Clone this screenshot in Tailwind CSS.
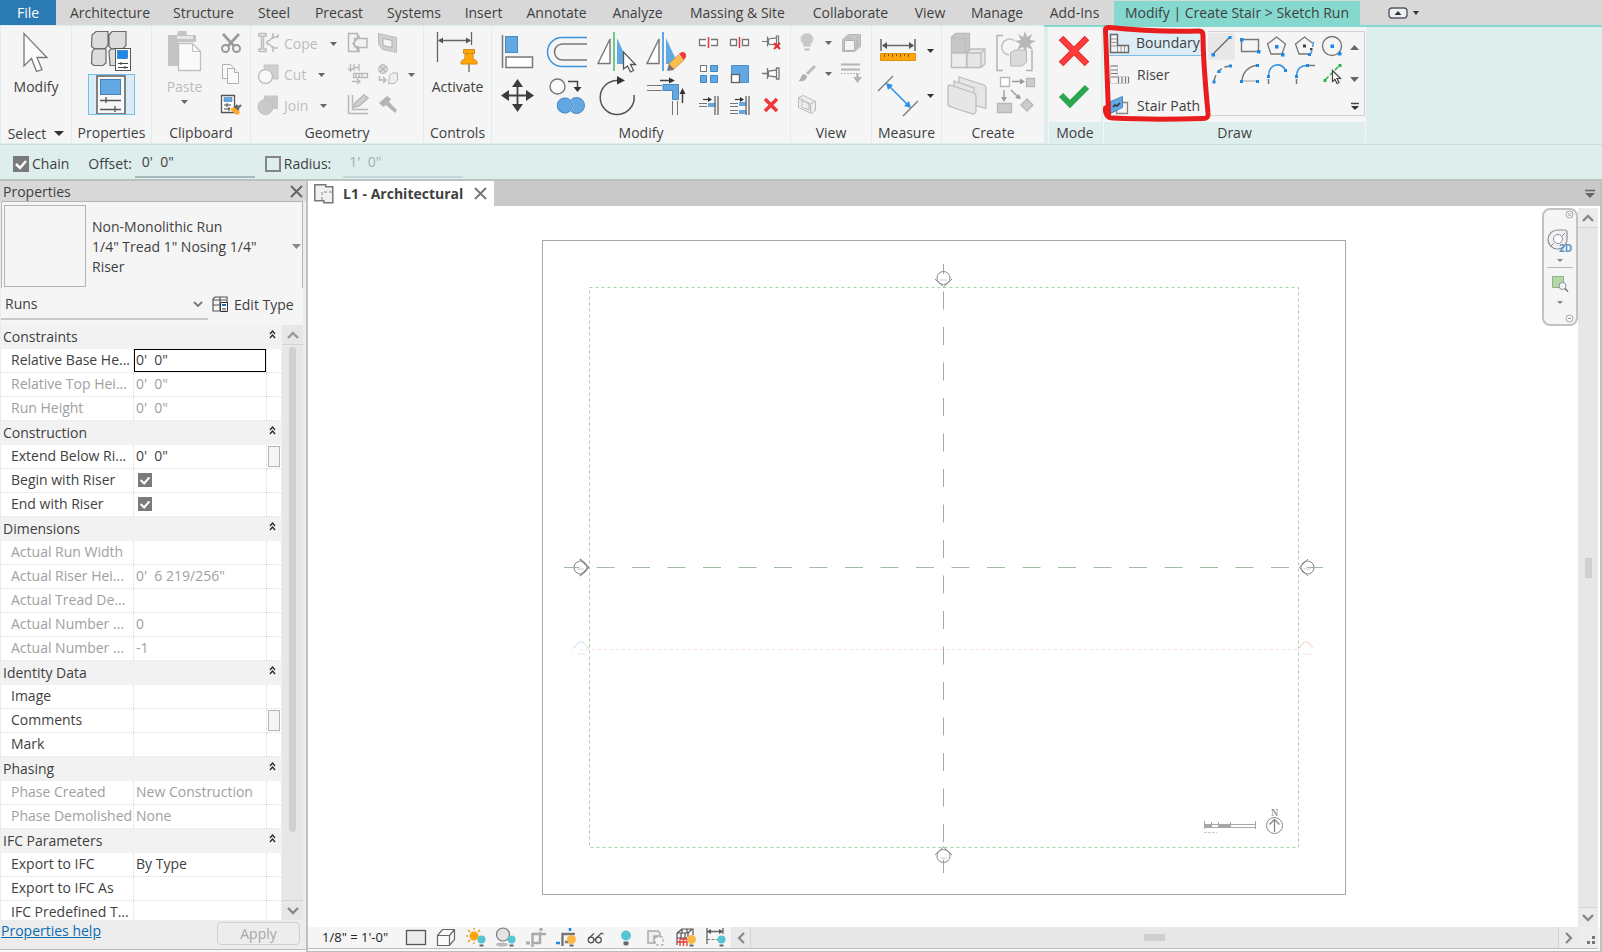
<!DOCTYPE html>
<html lang="en">
<head>
<meta charset="utf-8">
<title>Sketch Run - L1 Architectural</title>
<script src="https://cdn.jsdelivr.net/npm/@tailwindcss/browser@4"></script>
</head>
<body class="flex h-screen flex-col overflow-hidden bg-[#f5f5f5] font-['Open_Sans','Noto_Sans',sans-serif] text-sm text-[#3f3f3f]">

<!-- Ribbon tabs -->
<nav class="flex h-[25px] shrink-0 items-stretch bg-[#d8d8d8] whitespace-nowrap">
  <button class="mr-[2px] w-14 bg-[#2a7ab4] text-white">File</button>
  <button class="w-[104px]">Architecture</button>
  <button class="w-[83px]">Structure</button>
  <button class="w-[58px]">Steel</button>
  <button class="w-[72px]">Precast</button>
  <button class="w-[78px]">Systems</button>
  <button class="w-[61px]">Insert</button>
  <button class="w-[85px]">Annotate</button>
  <button class="w-[77px]">Analyze</button>
  <button class="w-[123px]">Massing &amp; Site</button>
  <button class="w-[103px]">Collaborate</button>
  <button class="w-14">View</button>
  <button class="w-[78px]">Manage</button>
  <button class="w-[77px]">Add-Ins</button>
  <button class="mt-px ml-px w-[246px] bg-[#84d8ce]">Modify | Create Stair &gt; Sketch Run</button>
  <button aria-label="Minimize ribbon" class="ml-7"><svg width="34" height="14" viewBox="0 0 34 14"><rect x="1" y="2" width="18" height="10" rx="3" fill="#eef0f4" stroke="#555b66" stroke-width="1.4"/><path d="M6.500 9h7L10 5zM25 5h6l-3 4z" fill="#333"/></svg></button>
</nav>

<!-- Ribbon -->
<div class="flex h-[120px] shrink-0 border-b border-[#cddada] bg-[#deeeed]">
  <section class="mt-px mb-px ml-px flex w-[70px] flex-col bg-[#f5f5f5]">
    <button class="flex h-24 flex-col items-center"><svg width="70" height="48" viewBox="1 26 70 48"><path d="M24 33.500V66L31.500 58.500 36.500 71.500 42 69.500 37 57.500H47z" fill="#fcfcfc" stroke="#777" stroke-width="1.300"/></svg><span class="mt-[3px]">Modify</span></button>
    <button class="flex h-[22px] items-center justify-center gap-2 pt-[3px]">Select <svg width="10" height="5" viewBox="0 0 10 5"><path d="M0 0h10L5 5z" fill="#333"/></svg></button>
  </section>
  <section class="mt-px mb-px ml-px flex w-[79px] flex-col bg-[#f5f5f5]">
    <div class="flex h-24 flex-col items-center pt-1">
      <button aria-label="Type Properties"><svg width="47" height="44" viewBox="88 30 47 44"><g fill="#dcdcdc" stroke="#6b6b6b" stroke-width="1.200"><path d="M92 35l4-3.500h12v14l-3 3H94l-2.500-2zM109 35l3-3.500h14v14l-3 3h-12l-2-2zM92 52l2-3h12v14l-3 2.500H94l-2.500-2zM109 51l2-2h14v14l-3 2.500h-12z"/></g><rect x="115.500" y="48.500" width="15" height="22" fill="#fff" stroke="#555"/><rect x="117.500" y="50.500" width="10" height="8" fill="#1e88e5" stroke="#1565c0" stroke-width=".6"/><path d="M118 63.500h10M118 67.500h10M121 62v3M125 66v3" stroke="#444"/></svg></button>
      <button aria-label="Properties" class="h-[41px] w-[47px] border border-[#74bfe6] bg-[#d9ebf5]"><svg width="45" height="39" viewBox="89 76 45 39"><rect x="97" y="77" width="28" height="38" fill="#f7f7f7" stroke="#666" stroke-width="1.600"/><rect x="100.500" y="80.500" width="20" height="15" fill="#62a9e4" stroke="#4a7db0"/><path d="M100 101.500h4M108 101.500h13M100 110.500h12M117 110.500h4M103 101.500h5M106 98v6M112 110.500h5M115 107v6" stroke="#555" stroke-width="1.300"/></svg></button>
    </div>
    <h2 class="pt-[2px] text-center leading-5">Properties</h2>
  </section>
  <section class="mt-px mb-px ml-px flex w-[98px] flex-col bg-[#f5f5f5]">
    <div class="flex h-24">
      <button disabled class="flex w-[62px] flex-col items-center pl-[3px] text-[#bdbdbd]"><svg width="59" height="48" viewBox="154 26 59 48"><path d="M167 35h9l1-4h8l1 4h9v7H177v24H167z" fill="#c4c4c4"/><path d="M176 36h16v3h-16z" fill="#e6e6e6"/><path d="M177.500 43.500h14l8 8v19h-22z" fill="#fafafa" stroke="#c0c0c0" stroke-width="1.300"/><path d="M191.500 43.500v8h8" fill="none" stroke="#c0c0c0"/></svg><span class="mt-[3px]">Paste</span><svg class="mt-[3px]" width="7" height="4"><path d="M0 0h7L3.500 4z" fill="#666"/></svg></button>
      <div class="flex flex-col pt-[2px]">
        <button aria-label="Cut"><svg width="34" height="31" viewBox="214 28 34 31"><g fill="none" stroke="#9a9a9a" stroke-width="2"><circle cx="225.500" cy="48.500" r="3.500"/><circle cx="236.500" cy="48.500" r="3.500"/><path d="M223 34l11 12M239 34L228 46" stroke-width="2.600"/></g></svg></button>
        <button aria-label="Copy"><svg width="34" height="31" viewBox="214 59 34 31"><g fill="#fafafa" stroke="#b0b0b0"><path d="M222.500 64.500h8l3 3v11h-11z"/><path d="M227.500 68.500h7l4 4v11h-11z"/><path d="M234.500 68.500v4h4"/></g></svg></button>
        <button aria-label="Match Type"><svg width="34" height="31" viewBox="214 90 34 31"><path d="M221.500 95.500h13v17h-13z" fill="#fff" stroke="#555" stroke-width="1.300"/><path d="M224 97.500h8v4h-8z" fill="#62a9e4" stroke="#4a7db0" stroke-width=".6"/><path d="M224 105h7M224 109h6M227 103v4M229 107v4" stroke="#444"/><path d="M230 109l4-2 6 5-2 3-3-1z" fill="#ffa726"/><path d="M234 106l5 4M237 109l4-4M236 105l3 3" stroke="#666" stroke-width="2"/></svg></button>
      </div>
    </div>
    <h2 class="pt-[2px] text-center leading-5">Clipboard</h2>
  </section>
  <section class="mt-px mb-px ml-px flex w-[172px] flex-col bg-[#f5f5f5]">
    <div class="flex h-24 pt-[2px] text-[#bdbdbd]">
      <div class="flex w-[91px] flex-col">
        <button class="flex h-[31px] items-center"><svg width="33" height="31" viewBox="251 28 33 31"><g fill="none" stroke="#bcbcbc" stroke-width="1.500"><path d="M259 33.500h7M259 51.500h7M259 33v3h2.500v13H259v3M266 33v3h-2.500v13H266v3M278 37h-5l-4 4h-2M278 48h-5l-4-4h-2v-3M278 34v4M273 33v6M273 46v6" /></g></svg>Cope<svg class="ml-3" width="7" height="4"><path d="M0 0h7L3.500 4z" fill="#666"/></svg></button>
        <button class="flex h-[31px] items-center"><svg width="33" height="31" viewBox="251 59 33 31"><path d="M264 65h14v14h-5a8 8 0 0 0-9-11z" fill="#d0d0d0" stroke="#c4c4c4"/><circle cx="265.500" cy="76.500" r="7" fill="#f8f8f8" stroke="#bcbcbc" stroke-width="1.400"/></svg>Cut<svg class="ml-3" width="7" height="4"><path d="M0 0h7L3.500 4z" fill="#666"/></svg></button>
        <button class="flex h-[31px] items-center"><svg width="33" height="31" viewBox="251 90 33 31"><path d="M264 95.500h14V109h-14z" fill="#c8c8c8"/><circle cx="265.500" cy="107" r="7.500" fill="#cacaca" stroke="#c0c0c0"/></svg>Join<svg class="ml-3" width="7" height="4"><path d="M0 0h7L3.500 4z" fill="#666"/></svg></button>
      </div>
      <div class="flex flex-col">
        <button aria-label="Wall Joins"><svg width="31" height="31" viewBox="341 28 31 31"><path d="M347.500 33.500h9v5h-3v8h3v5h-9zM366 38.500v9h-8v4l-6-8 6-7v2z" fill="#f2f2f2" stroke="#b4b4b4" stroke-width="1.400"/></svg></button>
        <button aria-label="Beam Joins"><svg width="31" height="31" viewBox="341 59 31 31"><g fill="none" stroke="#b8b8b8" stroke-width="1.300"><path d="M349.500 64v6M347 68l2.500 3 2.500-3M353 64v7M358 64v7M353 67.500h5M352.500 73.500h14v4h-14v-4M355 73v4M358 73v4M361 73v4M351 81.500h8M356 79l3 2.500-3 2.500"/></g></svg></button>
        <button aria-label="Split Face"><svg width="31" height="31" viewBox="341 90 31 31"><g fill="none" stroke="#b8b8b8" stroke-width="1.500"><path d="M347.500 95v18.500H367M351.500 95v14.500H367"/><path d="M353 107l1-4 9-8 4 3-9 8z" fill="#d0d0d0"/></g></svg></button>
      </div>
      <div class="flex flex-col">
        <button aria-label="Opening"><svg width="31" height="31" viewBox="373 28 31 31"><path d="M378.500 33.500l18 4v15l-14-3-4-5z" fill="#cfcfcf" stroke="#bcbcbc"/><path d="M383 38.500l9 2v7l-9-2z" fill="#f4f4f4" stroke="#b0b0b0"/></svg></button>
        <button aria-label="Paint"><svg width="31" height="31" viewBox="373 59 31 31"><circle cx="383" cy="69" r="4.500" fill="#ddd" stroke="#b8b8b8"/><path d="M380 66l6 6M386 66l-6 6M379.500 76v4h6M383 77l3 3-3 3" fill="none" stroke="#b8b8b8" stroke-width="1.400"/><path d="M389.500 75.500l3-2.500h5v7l-3 3.500h-6z" fill="#eee" stroke="#b8b8b8"/></svg></button>
        <button aria-label="Demolish"><svg width="31" height="31" viewBox="373 90 31 31"><path d="M379 103l8-7 4 3-2 3 8 8-2 3-9-8-3 2z" fill="#b4b4b4"/></svg></button>
      </div>
      <button aria-label="More paint tools" class="h-[93px] w-4 pl-1"><svg width="7" height="4"><path d="M0 0h7L3.500 4z" fill="#666"/></svg></button>
    </div>
    <h2 class="pt-[2px] text-center leading-5">Geometry</h2>
  </section>
  <section class="mt-px mb-px ml-px flex w-[67px] flex-col bg-[#f5f5f5]">
    <button class="flex h-24 flex-col items-center"><svg width="67" height="48" viewBox="424 26 67 48"><path d="M437.500 32v30M471.500 32v13M439 40.500h31" stroke="#666" fill="none" stroke-width="1.300"/><path d="M438 40.500l5-3v6zM471 40.500l-5-3v6z" fill="#555"/><path d="M469 64v8" stroke="#666" stroke-width="1.300"/><path d="M463.500 49.500h11v4h-1.500v5l4 3v2.500h-16v-2.500l4-3v-5h-1.500z" fill="#ffa509" stroke="#d18a12"/><path d="M465 53.500h8" stroke="#d18a12"/></svg><span class="mt-[3px]">Activate</span></button>
    <h2 class="pt-[2px] text-center leading-5">Controls</h2>
  </section>
  <section class="mt-px mb-px ml-px flex w-[298px] flex-col bg-[#f5f5f5]">
    <div class="flex h-24">
      <div class="grid w-[201px] grid-cols-4 content-start pt-1">
        <button aria-label="Align"><svg width="50" height="44" viewBox="492 30 50 44"><path d="M502.500 35v33" stroke="#777" stroke-width="1.500"/><rect x="505.500" y="36.500" width="12" height="16" fill="#62a9e4" stroke="#4a88be"/><rect x="506" y="57" width="26.500" height="10.500" fill="#fff" stroke="#777" stroke-width="1.500"/></svg></button>
        <button aria-label="Offset"><svg width="50" height="44" viewBox="542 30 50 44"><path d="M587 37.500h-25a14.500 14.500 0 0 0 0 29h25" fill="none" stroke="#3a93e0" stroke-width="1.500"/><path d="M587 44h-24.500a8 8 0 0 0 0 16H587" fill="none" stroke="#777" stroke-width="1.500"/></svg></button>
        <button aria-label="Mirror pick axis"><svg width="50" height="44" viewBox="593 30 50 44"><path d="M610 39v24.500h-12z" fill="#fff" stroke="#777" stroke-width="1.400"/><path d="M617 38l12 26h-12z" fill="#62a9e4"/><path d="M614 32v39" stroke="#4cc06c" stroke-width="1.600"/><path d="M623.500 52v17l4-3 3 6 3-1.500-3-6h5z" fill="#fff" stroke="#555" stroke-width="1.300"/></svg></button>
        <button aria-label="Mirror draw axis"><svg width="50" height="44" viewBox="643 30 50 44"><path d="M659 39v24.500h-12z" fill="#fff" stroke="#777" stroke-width="1.400"/><path d="M666 38l12 26h-12z" fill="#62a9e4"/><path d="M663 32v39" stroke="#3a93e0" stroke-width="1.600"/><path d="M667 71l2-8 4 3 1 4z" fill="#777"/><path d="M669 64l9-9 6 5-10 9z" fill="#fbbf4f" stroke="#c9912d" stroke-width=".7"/><path d="M679 54c2-3 8-3 7 3l-2 3z" fill="#f23c3c"/></svg></button>
        <button aria-label="Move"><svg width="50" height="44" viewBox="492 74 50 44"><path d="M517.500 84v23M506 95.500h23" stroke="#444" stroke-width="1.800"/><path d="M517.500 79l5.500 8h-11zM517.500 112l5.500-8h-11zM501 95.500l8-5.500v11zM534 95.500l-8-5.500v11z" fill="#3c3c3c"/></svg></button>
        <button aria-label="Copy"><svg width="50" height="44" viewBox="542 74 50 44"><circle cx="557.500" cy="86.500" r="7.500" fill="#fafafa" stroke="#777" stroke-width="1.400"/><path d="M568 81.500h9.500V89" fill="none" stroke="#444" stroke-width="1.500"/><path d="M573.500 87h8l-4 5z" fill="#333"/><circle cx="576.500" cy="105.500" r="8" fill="#62a9e4" stroke="#4a88be"/><circle cx="564.500" cy="105.500" r="8.300" fill="#62a9e4" stroke="#f5f5f5"/><circle cx="565" cy="105.500" r="7.500" fill="#62a9e4" stroke="#4a88be"/></svg></button>
        <button aria-label="Rotate"><svg width="50" height="44" viewBox="593 74 50 44"><path d="M618 80.500a17 17 0 1 0 16 14.500" fill="none" stroke="#555" stroke-width="1.500"/><path d="M617 76l8 4.500-8 4z" fill="#333"/></svg></button>
        <button aria-label="Trim"><svg width="50" height="44" viewBox="643 74 50 44"><path d="M660 80.500h10M682.500 103V92" stroke="#444" stroke-width="1.500"/><path d="M669 77.500l6 3-6 3zM682.500 88l-3 6h6z" fill="#333"/><path d="M663 84.500h15.500v15h-6v-9H663z" fill="#62a9e4" stroke="#4a88be"/><path d="M647 85.500h15M647 90.500h15M672.500 101v14M677.500 101v14" stroke="#777"/></svg></button>
      </div>
      <div class="grid w-[93px] grid-cols-3 content-start pt-[2px]">
        <button aria-label="Split element"><svg width="31" height="31" viewBox="693 28 31 31"><path d="M706 39.500h-6.500v6h6.500M711 39.500h6.500v6H711" fill="#fff" stroke="#777" stroke-width="1.300"/><path d="M708.500 37v11" stroke="#e23b3b" stroke-width="1.500"/></svg></button>
        <button aria-label="Split with gap"><svg width="31" height="31" viewBox="724 28 31 31"><path d="M730.500 39.500h6v6h-6zM742.500 39.500h6v6h-6z" fill="#fff" stroke="#777" stroke-width="1.300"/><path d="M739.500 37v11" stroke="#e23b3b" stroke-width="1.500"/></svg></button>
        <button aria-label="Unpin"><svg width="31" height="31" viewBox="755 28 31 31"><path d="M762 41.500h5M767.500 36.500v10M768.500 39v5l8 1v-7zM776.500 36v11h2V36z" fill="#fff" stroke="#777" stroke-width="1.200"/><path d="M774 43l6 6M780 43l-6 6" stroke="#ee2c2c" stroke-width="2"/></svg></button>
        <button aria-label="Array"><svg width="31" height="31" viewBox="693 59 31 31"><rect x="700.500" y="65.500" width="6" height="6" fill="#fff" stroke="#777"/><path d="M710.500 65.500h7v6h-7zM700.500 75.500h6v7h-6zM710.500 75.500h7v7h-7z" fill="#62a9e4" stroke="#3f86c4"/></svg></button>
        <button aria-label="Scale"><svg width="31" height="31" viewBox="724 59 31 31"><path d="M731.500 65.500h17v17h-17z" fill="#62a9e4" stroke="#4a90cc"/><rect x="731.500" y="74.500" width="8" height="8" fill="#fff" stroke="#666" stroke-width="1.400"/></svg></button>
        <button aria-label="Pin"><svg width="31" height="31" viewBox="755 59 31 31"><path d="M762 73.500h5.500M767.500 68v11M768.500 71v5l8 1v-7zM776.500 68v11h2.500V68z" fill="#fff" stroke="#777" stroke-width="1.300"/></svg></button>
        <button aria-label="Extend single"><svg width="31" height="31" viewBox="693 90 31 31"><path d="M703 99.500h6" stroke="#333" stroke-width="1.200"/><path d="M708 97l4 2.500-4 2.500z" fill="#333"/><path d="M699 103.500h8M699 106.500h8" stroke="#777"/><path d="M708 103h8v4h-8z" fill="#62a9e4"/><path d="M715 96v19M718 96v19" stroke="#777" stroke-width="1.500"/></svg></button>
        <button aria-label="Extend multiple"><svg width="31" height="31" viewBox="724 90 31 31"><path d="M735 99.500h6" stroke="#333" stroke-width="1.200"/><path d="M740 97l4 2.500-4 2.500z" fill="#333"/><path d="M730 103.500h8M730 106.500h8M730 110.500h8M730 113.500h8" stroke="#777"/><path d="M739 102h8v4h-8zM739 110h8v4h-8z" fill="#62a9e4"/><path d="M746 96v19M749 96v19" stroke="#777" stroke-width="1.500"/></svg></button>
        <button aria-label="Delete"><svg width="31" height="31" viewBox="755 90 31 31"><path d="M765 99l12 12M777 99l-12 12" stroke="#f23535" stroke-width="3.400"/></svg></button>
      </div>
    </div>
    <h2 class="pt-[2px] text-center leading-5">Modify</h2>
  </section>
  <section class="mt-px mb-px ml-px flex w-20 flex-col bg-[#f5f5f5]">
    <div class="grid h-24 grid-cols-[32px_12px_36px] content-start pt-[2px]">
      <button aria-label="Hide in view"><svg width="32" height="31" viewBox="792 28 32 31"><path d="M804.500 46.500l-.5-3c-4-4-2-10 4-10s8 6 4 10l-.5 3z" fill="#c8c8c8" stroke="#d8d8d8"/><path d="M805.500 48.500h5v2h-5z" fill="#bbb"/></svg></button>
      <button aria-label="Hide options"><svg width="12" height="31"><path d="M2 13h7L5.500 17z" fill="#666"/></svg></button>
      <button aria-label="Selection box"><svg width="36" height="31" viewBox="836 28 36 31"><path d="M843.500 39.500l6-5h12v12l-6 5h-12z" fill="#c4c4c4" stroke="#b8b8b8"/><path d="M845.500 40.500h10v10h-10zM848 38h9l2-1.500M858 40v8" fill="#f4f4f4" stroke="#b0b0b0"/></svg></button>
      <button aria-label="Override graphics"><svg width="32" height="31" viewBox="792 59 32 31"><path d="M799 81c3 0 2-6 6-7l3 2c0 4-4 6-9 5z" fill="#b0b0b0"/><path d="M808 74l8-8" stroke="#bcbcbc" stroke-width="3"/></svg></button>
      <button aria-label="Override options"><svg width="12" height="31"><path d="M2 13h7L5.500 17z" fill="#666"/></svg></button>
      <button aria-label="Linework"><svg width="36" height="31" viewBox="836 59 36 31"><path d="M842 64.500h19M842 69.500h19" stroke="#b4b4b4" stroke-width="2"/><path d="M842 73.500h19" stroke="#b4b4b4" stroke-dasharray="2 1"/><path d="M858.500 74v5" stroke="#aaa" stroke-width="2"/><path d="M854 77h9l-4.500 6z" fill="#b4b4b4"/></svg></button>
      <button aria-label="Displace elements"><svg width="32" height="31" viewBox="792 90 32 31"><path d="M799.500 97.500l5-2 12 6v9l-4 3-13-6zM799.500 98l12 6v9M811.500 104l5-3M803 100v7l7 3v-6z" fill="#ececec" stroke="#bcbcbc"/></svg></button>
    </div>
    <h2 class="pt-[2px] text-center leading-5">View</h2>
  </section>
  <section class="mt-px mb-px ml-px flex w-[69px] flex-col bg-[#f5f5f5]">
    <div class="grid h-24 grid-cols-[48px_21px] content-start pt-1">
      <button aria-label="Aligned dimension"><svg width="48" height="44" viewBox="872 30 48 44"><path d="M881 39v12M915 39v12M883 45.500h30" stroke="#666" stroke-width="1.500"/><path d="M882 45.500l5-3.500v7zM914 45.500l-5-3.500v7z" fill="#555"/><path d="M880.500 53.500h35v7h-35z" fill="#ffa409" stroke="#dd9312"/><path d="M884.500 54v3M888.500 54v2M892.500 54v3M896.500 54v2M900.500 54v3M904.500 54v2M908.500 54v3" stroke="#7a5513"/></svg></button>
      <button aria-label="Dimension options"><svg width="21" height="44"><path d="M7 19h7L10.500 23z" fill="#333"/></svg></button>
      <button aria-label="Measure between"><svg width="48" height="44" viewBox="872 74 48 44"><path d="M878 91l15-15M903 116l15-15" stroke="#777" stroke-width="1.300"/><path d="M889 86l19 19" stroke="#2c8fe4" stroke-width="1.600"/><path d="M886 83l7 2-5 5zM911 108l-7-2 5-5z" fill="#2c8fe4"/></svg></button>
      <button aria-label="Measure options"><svg width="21" height="44"><path d="M7 20h7L10.500 24z" fill="#333"/></svg></button>
    </div>
    <h2 class="pt-[2px] text-center leading-5">Measure</h2>
  </section>
  <section class="mt-px mb-px ml-px flex w-[102px] flex-col bg-[#f5f5f5]">
    <div class="grid h-24 grid-cols-[50px_52px] content-start pt-1">
      <button aria-label="Create assembly"><svg width="50" height="44" viewBox="942 30 50 44"><g stroke="#bdbdbd" stroke-width="1.300"><path d="M951.500 37l4-3.500h14v16l-4 3.500h-14z" fill="#c8c8c8"/><path d="M951.500 53h15v14.500h-15z" fill="#ececec"/><path d="M967 53l4-4h14v15l-4 3.500h-14z" fill="#e6e6e6"/><path d="M967 53h14v14M981 53l4-4M951.500 38h14v15" fill="none"/></g></svg></button>
      <button aria-label="Create parts"><svg width="52" height="44" viewBox="992 30 52 44"><path d="M1003 35.500h-6v35h6M1026 70.500h6V50" fill="none" stroke="#b0b0b0" stroke-width="1.400"/><path d="M1009 55a8 8 0 1 1 6-14" fill="none" stroke="#c4c4c4" stroke-width="1.500"/><path d="M1025 31l2 6 5-3-2 6 6 1-6 3 3 6-6-3-2 5-2-5-6 3 3-6-5-3 6-1-3-6 5 3z" fill="#b8b8b8"/><path d="M1010.500 53l4-3h12v12l-4 4h-12z" fill="#dadada" stroke="#b8b8b8"/></svg></button>
      <button aria-label="Create group"><svg width="50" height="44" viewBox="942 74 50 44"><g fill="#e6e6e6" stroke="#bcbcbc" stroke-width="1.300"><path d="M959 77l25 8q2 1 2 3v19q0 2-2 1l-23-7q-2-1-2-3z"/><path d="M954 81l20 7v20l-20-6z"/><path d="M950 85l24 8q2 1 2 3v16q-1 2-3 2l-22-7q-3-1-3-3V87q0-2 2-2z"/></g></svg></button>
      <button aria-label="Create similar"><svg width="52" height="44" viewBox="992 74 52 44"><g stroke="#b8b8b8" stroke-width="1.300" fill="#ccc"><path d="M1000.500 77.500h9v9h-9z" fill="#fff"/><path d="M1026.500 78.500h8v8h-8zM997.500 103.500h14v9h-14zM1027 99l6 6-6 6-6-6z"/><path d="M1012 81.500h9M1004 90v8M1011 90l7 7" stroke="#999"/></g><path d="M1020 78.500l5 3-5 3zM1001 97h6l-3 5zM1021 99l-6-1 4-4z" fill="#999"/></svg></button>
    </div>
    <h2 class="pt-[2px] text-center leading-5">Create</h2>
  </section>

  <!-- Contextual panels -->
  <div class="flex flex-1 border-t-2 border-[#84d8ce] pb-px pl-1">
    <section class="flex w-[53px] flex-col bg-[#f5f5f5]">
      <div class="flex h-[95px] flex-col items-center pt-[3px]">
        <button aria-label="Cancel edit mode"><svg width="53" height="44" viewBox="1048 30 53 44"><path d="M1061 38l26 26M1087 38l-26 26" stroke="#e12929" stroke-width="6.400"/><path d="M1061.500 38.500l25 25M1086.500 38.500l-25 25" stroke="#ff3b3b" stroke-width="4.600"/></svg></button>
        <button aria-label="Finish edit mode"><svg width="53" height="44" viewBox="1048 74 53 44"><path d="M1061 95l9 9 17-17" fill="none" stroke="#2aa64e" stroke-width="6"/></svg></button>
      </div>
      <h2 class="ml-px flex-1 bg-[#deeeed] pt-px text-center leading-5">Mode</h2>
    </section>
    <section class="relative ml-0.5 flex w-[263px] flex-col border-r border-l border-[#f5f5f5] bg-[#f5f5f5]">
      <div class="flex h-[95px]">
        <div class="flex w-[104px] flex-col gap-[6px] pt-1 pr-[6px] pl-[5px]">
          <button class="flex h-[25px] items-center gap-[6px] border-b border-[#7dbfe8] bg-[#dcedf6]"><svg width="21" height="21" viewBox="0 0 21 21"><path d="M1.500 1.500h7v11h11v7h-18z" fill="#f2f2f2" stroke="#666" stroke-width="1.400"/><path d="M2 6h6M2 9.500h6M2 13h6M8.500 13v6M12 13v6M15.500 13v6" stroke="#999"/></svg>Boundary</button>
          <button class="flex h-[25px] items-center gap-[7px]"><svg width="21" height="21" viewBox="0 0 21 21"><path d="M1.500 1.500h7v11h11v7h-18z" fill="none" stroke="#ccc"/><path d="M2 2h6.500M2 6h6.500M2 9.500h6.500M2 13h6.500M9.500 13v6M13 13v6M16.500 13v6M19.500 13v6" stroke="#777" stroke-width="1.200"/></svg>Riser</button>
          <button class="flex h-[25px] items-center gap-[7px] whitespace-nowrap"><svg width="21" height="21" viewBox="0 0 21 21"><path d="M7.500 7.500h11v11h-11z" fill="#f5f5f5" stroke="#888" stroke-width="1.300"/><path d="M1.500 6.500l12-5v11l-12 6z" fill="#62a9e4" stroke="#4a88be"/><path d="M4 12l2-2 2 1 3-3" stroke="#333" fill="none" stroke-width="1.500"/></svg>Stair Path</button>
        </div>
        <div class="mt-1 flex h-[85px] flex-1 border border-l-0 border-[#d2d2d2]">
          <div class="grid flex-1 grid-cols-5 content-start justify-items-center pt-px">
            <button aria-label="Line" class="bg-[#e8e8e8]"><svg width="27" height="27" viewBox="1205 33 27 27"><path d="M1211 53l15-15" stroke="#666" stroke-width="1.300"/><path d="M1208.500 53h3.500v3.500h-3.500zM1225.500 36h3v3h-3z" fill="#1e88e5"/></svg></button>
            <button aria-label="Rectangle"><svg width="27" height="27" viewBox="1232 33 27 27"><path d="M1237.500 39.500h17v12h-17z" fill="none" stroke="#777" stroke-width="1.400"/><path d="M1236 38h3.500v3.500h-3.500zM1253 50h3.500v3.500h-3.500z" fill="#1e88e5"/></svg></button>
            <button aria-label="Inscribed polygon"><svg width="27" height="27" viewBox="1259 33 27 27"><path d="M1272.500 37l9 7-3.500 10h-11l-3.500-10z" fill="none" stroke="#777" stroke-width="1.300"/><path d="M1271 45h3.500v3.500h-3.500zM1277 53h3.500v3.500h-3.500z" fill="#1e88e5"/></svg></button>
            <button aria-label="Circumscribed polygon"><svg width="27" height="27" viewBox="1286 33 27 27"><path d="M1307.500 43l-8-6-9 7 3.500 10h9" fill="none" stroke="#777" stroke-width="1.300"/><path d="M1298 44.500h3v3h-3z" fill="#444"/><path d="M1305 48h2.500v2.500h-2.500z" fill="#444"/><path d="M1308.500 42l-1 5M1307 51l-2 4" stroke="#1e88e5" stroke-width="1.200"/><path d="M1303 53h3v3h-3z" fill="#1e88e5"/></svg></button>
            <button aria-label="Circle"><svg width="27" height="27" viewBox="1313 33 27 27"><circle cx="1326" cy="46" r="9.500" fill="none" stroke="#777" stroke-width="1.400"/><path d="M1324.500 44.500h3.500v3.500h-3.500zM1332 52h3.500v3.500h-3.500z" fill="#1e88e5"/></svg></button>
            <button aria-label="Start-end-radius arc"><svg width="27" height="27" viewBox="1205 60 27 27"><path d="M1211 81q3-14 16-15" fill="none" stroke="#777" stroke-width="1.500" stroke-dasharray="6 3"/><path d="M1209.500 80.500h3v3h-3zM1214.500 70h3v3h-3zM1226 64.500h3v3h-3z" fill="#1e88e5"/></svg></button>
            <button aria-label="Center-ends arc"><svg width="27" height="27" viewBox="1232 60 27 27"><path d="M1238 80q2-13 16-15" fill="none" stroke="#777" stroke-width="1.400"/><path d="M1239 81h14" stroke="#bbb" stroke-width="1.400"/><path d="M1236 80h3v3h-3zM1252 64h3v3h-3zM1252 80h3v3h-3z" fill="#1e88e5"/></svg></button>
            <button aria-label="Tangent end arc"><svg width="27" height="27" viewBox="1259 60 27 27"><path d="M1264.500 77c0-14 12-15 17-7" fill="none" stroke="#3a93e0" stroke-width="1.500"/><path d="M1264.500 79v5" stroke="#777" stroke-width="1.500"/><path d="M1263 75h3v3h-3zM1280 69h3v3h-3z" fill="#1e88e5"/></svg></button>
            <button aria-label="Fillet arc"><svg width="27" height="27" viewBox="1286 60 27 27"><path d="M1291.500 77c0-8 4-11.500 11-11.500" fill="none" stroke="#3a93e0" stroke-width="1.500"/><path d="M1291.500 79v5M1304 65.500h6" stroke="#777" stroke-width="1.500"/><path d="M1290 75h3v3h-3zM1301 64h3v3h-3z" fill="#1e88e5"/></svg></button>
            <button aria-label="Pick lines"><svg width="27" height="27" viewBox="1313 60 27 27"><path d="M1319 80l15-15" stroke="#35b755" stroke-width="1.500" stroke-dasharray="5 2"/><path d="M1317.500 79h3v3h-3zM1332.500 64h3v3h-3z" fill="#2fb052"/><path d="M1326.500 70.500v11l2.500-2 2 4 2-1-2-4h3.500z" fill="#fff" stroke="#444" stroke-width="1.200"/></svg></button>
          </div>
          <button aria-label="Scroll draw tools" class="w-[18px]"><svg width="18" height="83" viewBox="1340 32 18 83"><path d="M1344 50h9l-4.500-5zM1344 77h9l-4.500 5z" fill="#666"/><path d="M1345 103.500h8" stroke="#444" stroke-width="1.400"/><path d="M1345 106h8l-4 4z" fill="#333"/></svg></button>
        </div>
      </div>
      <h2 class="flex-1 bg-[#deeeed] pt-px text-center leading-5">Draw</h2>
      <!-- Freehand markup around the sketch tools -->
      <svg class="pointer-events-none absolute -top-1 -left-1 z-10" width="112" height="102" viewBox="1099 23 112 102"><path d="M1104.500 30Q1104 27.500 1108 27.500Q1150 32 1198 31Q1202 31 1202 35Q1202 60 1207 113Q1208 118.500 1202 118.500Q1150 120 1112 118Q1104 118 1104.500 108Q1108 116 1107.500 114Q1106 70 1104.500 30z" fill="none" stroke="#e81e1e" stroke-width="5" stroke-linejoin="round"/></svg>
    </section>
  </div>
</div>

<!-- Options bar -->
<div class="flex h-9 shrink-0 items-center border-b-2 border-[#bdc1c0] bg-[#deeeed] pt-[3px] pl-[13px]">
  <input id="chain" type="checkbox" checked class="size-4 appearance-none bg-[#7a7a7a] bg-[url('data:image/svg+xml,%3Csvg%20xmlns=%22http://www.w3.org/2000/svg%22%20viewBox=%220%200%2016%2016%22%3E%3Cpath%20d=%22M3%208l4%204%206-7%22%20fill=%22none%22%20stroke=%22white%22%20stroke-width=%222.500%22/%3E%3C/svg%3E')]">
  <label for="chain" class="ml-[3px]">Chain</label>
  <label for="offset" class="ml-[19px]">Offset:</label>
  <input id="offset" type="text" value="0'  0&quot;" class="ml-[3px] h-[29px] w-[120px] border-b-2 border-[#a9bcbb] px-[7px] pb-[2px]">
  <input id="radius-on" type="checkbox" class="ml-[10px] size-4 appearance-none border-2 border-[#858585]">
  <label for="radius-on" class="ml-[3px]">Radius:</label>
  <input type="text" aria-label="Radius value" value="1'  0&quot;" disabled class="ml-3 h-[29px] w-[120px] border-b-2 border-[#c5d8d7] px-[6px] pb-[2px] text-[#a3aead]">
</div>

<!-- Workspace -->
<main class="flex min-h-0 flex-1 border-r-2 border-[#bdc1c0]">
  <aside class="flex w-[308px] shrink-0 flex-col border-r-2 border-[#bdc1c0] bg-[#ededed]">
    <header class="flex h-5 shrink-0 items-center justify-between bg-[#d8d8d8] pr-[3px] pl-[3px]"><h1 class="pt-px">Properties</h1><button aria-label="Close properties"><svg width="13" height="13" viewBox="0 0 13 13"><path d="M1 1l11 11M12 1L1 12" stroke="#666" stroke-width="2"/></svg></button></header>
    <button class="mr-[3px] ml-px flex h-[87px] shrink-0 items-center border-x border-t border-[#b5b5b5] bg-[#f5f5f5] pt-[2px] pl-[2px] text-left leading-5">
      <span class="h-[82px] w-[82px] border border-[#b5b5b5]"></span>
      <span class="ml-[6px] flex-1 pt-[2px]">Non-Monolithic Run<br>1/4" Tread 1" Nosing 1/4"<br>Riser</span>
      <svg class="mr-px" width="9" height="5"><path d="M0 0h9L4.500 5z" fill="#888"/></svg>
    </button>
    <div class="mr-[3px] ml-px flex h-[37px] shrink-0 bg-[#f5f5f5]">
      <div class="flex h-8 w-[207px] items-center border-b-2 border-[#c8c8c8] pt-[2px] pr-[5px]">
        <select aria-label="Element filter" class="flex-1 appearance-none pl-1"><option>Runs</option></select>
        <svg width="10" height="7" viewBox="0 0 10 7"><path d="M1 1l4 4 4-4" fill="none" stroke="#777" stroke-width="1.800"/></svg>
      </div>
      <button class="ml-1 flex h-8 items-center gap-[5px] pt-px"><svg width="17" height="17" viewBox="0 0 17 17"><path d="M1 3l2-2h12v6M1 3v12h7M1 9h7M8 1v14M1 4h13M8 7h7" fill="none" stroke="#555" stroke-width="1.200"/><path d="M8.500 6.500h7v9h-7z" fill="#fff" stroke="#333"/><path d="M10 8h4v2h-4z" fill="#1e66c0"/><path d="M10 12.500h4M10 14h4" stroke="#555" stroke-width=".8"/></svg>Edit Type</button>
    </div>
    <div class="mr-[3px] ml-px flex min-h-0 flex-1">
      <div class="min-w-0 flex-1 overflow-hidden bg-white">
      <table class="w-full table-fixed border-separate border-spacing-0 text-left whitespace-nowrap [&_td]:h-6 [&_td]:border-r [&_td]:border-b [&_td]:border-dotted [&_td]:border-[#dcdcdc] [&_td]:pb-[2px] [&_td]:leading-5 [&_th]:h-6 [&_th]:bg-[#f2f2f2] [&_th]:p-0 [&_th]:pl-0.5 [&_th]:font-normal [&_td:first-child]:pl-[10px] [&_td:nth-child(2)]:pl-[2px] [&_svg]:mr-[6px] [&_svg]:mb-[6px] [&_tr[data-off]]:text-[#a0a0a0]">
        <colgroup><col class="w-[133px]"><col><col class="w-[15px]"></colgroup>
        <tr><th colspan="3"><button class="flex w-full items-center justify-between">Constraints<svg width="7" height="9"><path d="M1 4l2.500-3L6 4M1 8l2.500-3L6 8" fill="none" stroke="#222" stroke-width="1.200"/></svg></button></th></tr>
        <tr><td><label for="base">Relative Base He...</label></td><td class="pb-0! pl-0!"><input id="base" value="0'  0&quot;" class="block h-[23px] w-full border border-black pb-[2px] pl-px"></td><td></td></tr>
        <tr data-off><td>Relative Top Hei...</td><td class="whitespace-pre">0'  0"</td><td></td></tr>
        <tr data-off><td>Run Height</td><td class="whitespace-pre">0'  0"</td><td></td></tr>
        <tr><th colspan="3"><button class="flex w-full items-center justify-between">Construction<svg width="7" height="9"><path d="M1 4l2.500-3L6 4M1 8l2.500-3L6 8" fill="none" stroke="#222" stroke-width="1.200"/></svg></button></th></tr>
        <tr><td><label for="ext">Extend Below Ri...</label></td><td><input id="ext" value="0'  0&quot;" class="block h-5 w-full"></td><td class="pb-0!"><button aria-label="Associate parameter" class="ml-px block h-[21px] w-3 border border-[#b5b5b5] bg-[#f5f5f5]"></button></td></tr>
        <tr><td><label for="beg">Begin with Riser</label></td><td><input id="beg" type="checkbox" checked class="ml-0.5 block size-[14px] appearance-none bg-[#7a7a7a] bg-[url('data:image/svg+xml,%3Csvg%20xmlns=%22http://www.w3.org/2000/svg%22%20viewBox=%220%200%2016%2016%22%3E%3Cpath%20d=%22M3%208l4%204%206-7%22%20fill=%22none%22%20stroke=%22white%22%20stroke-width=%222.500%22/%3E%3C/svg%3E')]"></td><td></td></tr>
        <tr><td><label for="end">End with Riser</label></td><td><input id="end" type="checkbox" checked class="ml-0.5 block size-[14px] appearance-none bg-[#7a7a7a] bg-[url('data:image/svg+xml,%3Csvg%20xmlns=%22http://www.w3.org/2000/svg%22%20viewBox=%220%200%2016%2016%22%3E%3Cpath%20d=%22M3%208l4%204%206-7%22%20fill=%22none%22%20stroke=%22white%22%20stroke-width=%222.500%22/%3E%3C/svg%3E')]"></td><td></td></tr>
        <tr><th colspan="3"><button class="flex w-full items-center justify-between">Dimensions<svg width="7" height="9"><path d="M1 4l2.500-3L6 4M1 8l2.500-3L6 8" fill="none" stroke="#222" stroke-width="1.200"/></svg></button></th></tr>
        <tr data-off><td>Actual Run Width</td><td></td><td></td></tr>
        <tr data-off><td>Actual Riser Hei...</td><td class="whitespace-pre">0'  6 219/256"</td><td></td></tr>
        <tr data-off><td>Actual Tread De...</td><td></td><td></td></tr>
        <tr data-off><td>Actual Number ...</td><td>0</td><td></td></tr>
        <tr data-off><td>Actual Number ...</td><td>-1</td><td></td></tr>
        <tr><th colspan="3"><button class="flex w-full items-center justify-between">Identity Data<svg width="7" height="9"><path d="M1 4l2.500-3L6 4M1 8l2.500-3L6 8" fill="none" stroke="#222" stroke-width="1.200"/></svg></button></th></tr>
        <tr><td><label for="img">Image</label></td><td><input id="img" class="block h-5 w-full"></td><td></td></tr>
        <tr><td><label for="com">Comments</label></td><td><input id="com" class="block h-5 w-full"></td><td class="pb-0!"><button aria-label="Associate parameter" class="ml-px block h-[21px] w-3 border border-[#b5b5b5] bg-[#f5f5f5]"></button></td></tr>
        <tr><td><label for="mark">Mark</label></td><td><input id="mark" class="block h-5 w-full"></td><td></td></tr>
        <tr><th colspan="3"><button class="flex w-full items-center justify-between">Phasing<svg width="7" height="9"><path d="M1 4l2.500-3L6 4M1 8l2.500-3L6 8" fill="none" stroke="#222" stroke-width="1.200"/></svg></button></th></tr>
        <tr data-off><td>Phase Created</td><td>New Construction</td><td></td></tr>
        <tr data-off><td>Phase Demolished</td><td>None</td><td></td></tr>
        <tr><th colspan="3"><button class="flex w-full items-center justify-between">IFC Parameters<svg width="7" height="9"><path d="M1 4l2.500-3L6 4M1 8l2.500-3L6 8" fill="none" stroke="#222" stroke-width="1.200"/></svg></button></th></tr>
        <tr><td><label for="ifc">Export to IFC</label></td><td><input id="ifc" value="By Type" class="block h-5 w-full"></td><td></td></tr>
        <tr><td><label for="ifcas">Export to IFC As</label></td><td><input id="ifcas" class="block h-5 w-full"></td><td></td></tr>
        <tr><td><label for="ifcp">IFC Predefined T...</label></td><td><input id="ifcp" class="block h-5 w-full"></td><td></td></tr>
      </table>
      </div>
      <div class="flex w-[21px] shrink-0 flex-col items-center bg-[#e7e7e7]">
        <button aria-label="Scroll up" class="flex h-5 w-full items-center justify-center border-b border-[#d4d4d4]"><svg width="12" height="8"><path d="M1 7l5-5 5 5" fill="none" stroke="#999" stroke-width="2.400"/></svg></button>
        <div class="mt-[2px] h-[485px] w-[7px] rounded-full bg-[#d0d0d0]"></div>
        <button aria-label="Scroll down" class="mt-auto flex h-5 w-full items-center justify-center border-t border-[#d4d4d4]"><svg width="12" height="8"><path d="M1 1l5 5 5-5" fill="none" stroke="#888" stroke-width="2.400"/></svg></button>
      </div>
    </div>
    <footer class="flex h-[30px] shrink-0 items-start justify-between border-b border-[#bdbdbd] pr-[6px] pl-px"><a href="#help" class="mt-px text-[#0b6cb0] underline">Properties help</a><button disabled class="mt-[2px] h-[23px] w-[83px] rounded border border-[#d0d0d0] pt-px text-[#a8a8a8]">Apply</button></footer>
    <div class="h-[2px] shrink-0 bg-[#f8f8f8]"></div>
  </aside>

  <div class="flex min-w-0 flex-1 flex-col bg-[#f5f5f5]">
    <header class="flex h-[25px] shrink-0 items-center justify-between bg-[#c9c9c9] pr-1">
      <div class="flex h-full w-[186px] items-center bg-white pl-[6px]"><svg width="20" height="20" viewBox="0 0 20 20"><path d="M.800.800h11v2h7v16h-9v-2h-9z" fill="#f0f0f0" stroke="#777" stroke-width="1.500"/><path d="M8 16V8h11" fill="none" stroke="#aaa" stroke-dasharray="3 2" stroke-width="1.500"/></svg><button class="ml-[9px] font-bold">L1 - Architectural</button><button aria-label="Close view" class="ml-[11px]"><svg width="13" height="13" viewBox="0 0 13 13"><path d="M1 1l11 11M12 1L1 12" stroke="#777" stroke-width="1.900"/></svg></button></div>
      <button aria-label="View list"><svg width="12" height="10"><path d="M1 1.500h10" stroke="#666" stroke-width="1.600"/><path d="M1 4h10l-5 5z" fill="#666"/></svg></button>
    </header>
    <div class="flex min-h-0 flex-1 bg-white">
      <div class="relative min-w-0 flex-1">
        <svg class="block h-full w-full" viewBox="308 206 1270 721">
          <rect x="542.500" y="240.500" width="803" height="654" fill="none" stroke="#a6a6a6"/>
          <rect x="589.500" y="287.500" width="709" height="560" fill="none" stroke="#a5d3a5" stroke-dasharray="3 3"/>
          <path d="M943.500 264v609" stroke="#a8a8a8" stroke-dasharray="18 17.500" stroke-dashoffset="8"/>
          <path d="M564 567.500h759" stroke="#a3bba3" stroke-dasharray="18 17.500" stroke-dashoffset="3"/>
          <path d="M580 649.500h720" stroke="#f8dcdf" stroke-dasharray="3 3"/>
          <g fill="none" stroke="#8a8a8a">
            <circle cx="943.500" cy="278" r="6.500"/><path d="M935 279l8.500 8 8.500-8"/><path d="M940 280h7" stroke="#ccc"/>
            <circle cx="943.500" cy="856" r="6.500"/><path d="M935 855l8.500-8 8.500 8"/><path d="M940 858h7" stroke="#ccc"/>
            <circle cx="580.500" cy="567.500" r="6.500"/><path d="M580 559l8.500 8.500-8.500 8.500" stroke-width="1.500"/><path d="M577 569h7" stroke="#ccc"/>
            <circle cx="1307.500" cy="567.500" r="6.500"/><path d="M1308 559l-8.500 8.500 8.500 8.500"/><path d="M1304 569h7" stroke="#ccc"/>
          </g>
          <path d="M572 649l9-8 9 8M575 648a6 6 0 0 1 12 0M577 654h8" fill="none" stroke="#dfe6f6"/>
          <path d="M1298 649l8-8 8 8M1300 648a6 6 0 0 1 12 0M1303 654h8" fill="none" stroke="#fadcde"/>
          <g stroke="#a8a8a8" fill="none"><path d="M1205 824.500h50M1205 827.500h50M1204.500 821v8M1255.500 821v8M1211.500 822v4M1218.500 822v4M1230.500 822v4"/><path d="M1205 826h7M1218 826h13" stroke-width="3"/><path d="M1204 832.500h13" stroke="#ccc" stroke-dasharray="3 1"/></g>
          <g stroke="#888" fill="none"><circle cx="1274.500" cy="825.500" r="8"/><path d="M1274.500 832v-12M1269.500 824.500l5-5 5 5" stroke-width="1.300"/></g>
          <text x="1274.500" y="816" text-anchor="middle" class="font-['Liberation_Serif',serif] text-[10px]" fill="#777">N</text>
        </svg>
        <div class="absolute top-[2px] right-0 flex h-[118px] w-9 flex-col items-center rounded-lg border-2 border-[#c2c2c2] bg-[#f5f5f5]">
          <button aria-label="Close navigation bar" class="mr-[2px] self-end"><svg class="block" width="9" height="9"><circle cx="4.500" cy="4.500" r="3.500" fill="none" stroke="#aaa"/><path d="M3 3l3 3M6 3L3 6" stroke="#aaa"/></svg></button>
          <button aria-label="Steering wheel 2D" class="mt-[9px]"><svg class="block" width="26" height="26" viewBox="0 0 26 26"><path d="M11 2h7q2 0 2 2v8a9.500 9.500 0 1 1-9-10z" fill="#f0f0f0" stroke="#8b8f98" stroke-width="1.200"/><circle cx="11" cy="11" r="4.500" fill="#fff" stroke="#8b8f98"/><path d="M4 18l3-3M15 8l3-3" stroke="#8b8f98"/><text x="12" y="24" class="text-[10px] font-bold" fill="#5b93c8">2D</text></svg></button>
          <svg class="mt-[5px]" width="6" height="4"><path d="M0 0h6L3 3z" fill="#888"/></svg>
          <div class="mt-1 h-px w-[26px] bg-[#b8b8b8]"></div>
          <button aria-label="Zoom region" class="mt-[7px]"><svg class="block" width="18" height="18" viewBox="0 0 18 18"><path d="M1.500 1.500h11v11h-11z" fill="#b5d7a8" stroke="#8db47e"/><circle cx="11.500" cy="11" r="3.500" fill="#f0f4f8" stroke="#8b8f98"/><path d="M14 13.500l3 3" stroke="#777" stroke-width="1.600"/></svg></button>
          <svg class="mt-2" width="6" height="4"><path d="M0 0h6L3 3z" fill="#888"/></svg>
          <button aria-label="Navigation bar options" class="mt-auto mr-[2px] mb-px self-end"><svg class="block" width="9" height="9"><circle cx="4.500" cy="4.500" r="3.500" fill="none" stroke="#aaa"/><path d="M3 4.500h3" stroke="#999"/></svg></button>
        </div>
      </div>
      <div class="mt-[2px] mr-[2px] flex w-5 shrink-0 flex-col items-center bg-[#e7e7e7]">
        <button aria-label="Scroll up" class="flex h-5 w-full items-center justify-center border-b border-[#d4d4d4] bg-[#ebebeb]"><svg width="12" height="8"><path d="M1 7l5-5 5 5" fill="none" stroke="#888" stroke-width="2.400"/></svg></button>
        <div class="flex w-full flex-1 items-center justify-center"><div class="h-5 w-[7px] bg-[#cfcfcf]"></div></div>
        <button aria-label="Scroll down" class="flex h-5 w-full items-center justify-center border-t border-[#d4d4d4] bg-[#ebebeb]"><svg width="12" height="8"><path d="M1 1l5 5 5-5" fill="none" stroke="#888" stroke-width="2.400"/></svg></button>
      </div>
    </div>
    <footer class="mr-[2px] flex h-[22px] shrink-0 items-center border-b border-[#bdbdbd]">
      <button class="w-[93px] pl-[14px] text-left text-[13px] whitespace-nowrap text-[#222]">1/8" = 1'-0"</button>
      <button aria-label="Detail level"><svg width="30" height="21" viewBox="0 0 30 21"><rect x="5.500" y="3.500" width="19" height="14" fill="#ececec" stroke="#555" stroke-width="1.300"/></svg></button>
      <button aria-label="Visual style"><svg width="30" height="21" viewBox="0 0 30 21"><path d="M6.500 8.500l5-6h12v10l-5 6h-12zM6.500 8.500h12v10M18.500 8.500l5-6" fill="#fafafa" stroke="#666" stroke-width="1.200"/></svg></button>
      <button aria-label="Sun path"><svg width="30" height="21" viewBox="0 0 30 21"><circle cx="13" cy="9" r="4.500" fill="#ffa50a"/><path d="M13 1v2M5 9h2M7 3l2 2M19 3l-2 2M7 15l2-2M13 15v2" stroke="#e79a1a" stroke-width="1.300"/><circle cx="20.500" cy="12.500" r="4" fill="#55c5d4"/><path d="M18.500 17.500h4v2h-4z" fill="#666"/></svg></button>
      <button aria-label="Shadows"><svg width="30" height="21" viewBox="0 0 30 21"><ellipse cx="11" cy="17.500" rx="6" ry="2" fill="#bbb"/><circle cx="12" cy="7.500" r="6.500" fill="#e4e4e4" stroke="#777" stroke-width="1.200"/><circle cx="20.500" cy="12.500" r="4" fill="#55c5d4"/><path d="M18.500 17.500h4v2h-4z" fill="#666"/></svg></button>
      <button aria-label="Crop view"><svg width="30" height="21" viewBox="0 0 30 21"><path d="M5 16h4M20 1v3" stroke="#aaa" stroke-width="3"/><path d="M11.500 20V7H25M11 16h8V5" fill="none" stroke="#aaa" stroke-width="2.400"/></svg></button>
      <button aria-label="Show crop region"><svg width="30" height="21" viewBox="0 0 30 21"><path d="M5 16h4M19 1v3" stroke="#1e88e5" stroke-width="2.600"/><path d="M11.500 19V7H24M14 15h4" fill="none" stroke="#777" stroke-width="2.400"/><circle cx="20.500" cy="12.500" r="4.500" fill="#fbb848"/><path d="M18.500 17.500h4v2h-4z" fill="#666"/></svg></button>
      <button aria-label="Hide or isolate"><svg width="30" height="21" viewBox="0 0 30 21"><g fill="none" stroke="#555" stroke-width="1.300"><circle cx="10" cy="13" r="2.800"/><circle cx="17.500" cy="13" r="2.800"/><path d="M7.500 11.500l5.500-5M15 11.500l5-5q2-1 2 1M12.800 12.500h2"/></g></svg></button>
      <button aria-label="Reveal hidden"><svg width="30" height="21" viewBox="0 0 30 21"><circle cx="15" cy="8.500" r="5" fill="#55c5d4"/><path d="M12.500 14.500h5v3l-1.500 1h-2l-1.500-1z" fill="#666"/></svg></button>
      <button aria-label="Temporary properties"><svg width="30" height="21" viewBox="0 0 30 21"><path d="M17 4H7v12h6V9h6V6z" fill="#eee" stroke="#aaa" stroke-width="1.500"/><path d="M14 10h8v8h-8z" fill="none" stroke="#999" stroke-dasharray="3 2"/></svg></button>
      <button aria-label="Analytical model"><svg width="30" height="21" viewBox="0 0 30 21"><path d="M6 6l5-4h11v6M6 6h11v4M11 2v4M16 2v4M6 6v12M10 6v6M14 6v6M17 6l4-4M6 11h10" fill="none" stroke="#555" stroke-width="1.200"/><path d="M9 19v-7h7v7M6 15h10M12.500 12v7" fill="none" stroke="#e23b3b" stroke-width="1.300"/><circle cx="20.500" cy="12.500" r="4.500" fill="#fbb848"/><path d="M18.500 17.500h4v2h-4z" fill="#666"/></svg></button>
      <button aria-label="Reveal constraints"><svg width="30" height="21" viewBox="0 0 30 21"><path d="M6 1v16M22 1v6M6 4.500h16" fill="none" stroke="#666" stroke-width="1.300"/><path d="M6 4.500l4-2.500v5zM22 4.500l-4-2.500v5z" fill="#555"/><path d="M6 12.500h11" stroke="#777" stroke-dasharray="3 1.500"/><circle cx="20.500" cy="12.500" r="4" fill="#55c5d4"/><path d="M18.500 17.500h4v2h-4z" fill="#666"/></svg></button>
      <button aria-label="Scroll left" class="flex h-full w-5 items-center justify-center border-r border-[#d4d4d4] bg-[#e9e9e9]"><svg width="8" height="12"><path d="M7 1L2 6l5 5" fill="none" stroke="#888" stroke-width="2.200"/></svg></button>
      <div class="flex h-full flex-1 items-center justify-center bg-[#e7e7e7]"><div class="h-[7px] w-[21px] bg-[#cfcfcf]"></div></div>
      <button aria-label="Scroll right" class="flex h-full w-5 items-center justify-center border-l border-[#d4d4d4] bg-[#ebebeb]"><svg width="8" height="12"><path d="M1 1l5 5-5 5" fill="none" stroke="#888" stroke-width="2.200"/></svg></button>
      <svg class="h-full bg-[#ededed]" width="20" height="21"><path d="M9 14h3v3H9zM14 14h3v3h-3zM14 9h3v3h-3z" fill="#777"/></svg>
    </footer>
    <div class="h-[3px] shrink-0 border-b border-[#bdbdbd] bg-[#f8f8f8]"></div>
  </div>
</main>
</body>
</html>
